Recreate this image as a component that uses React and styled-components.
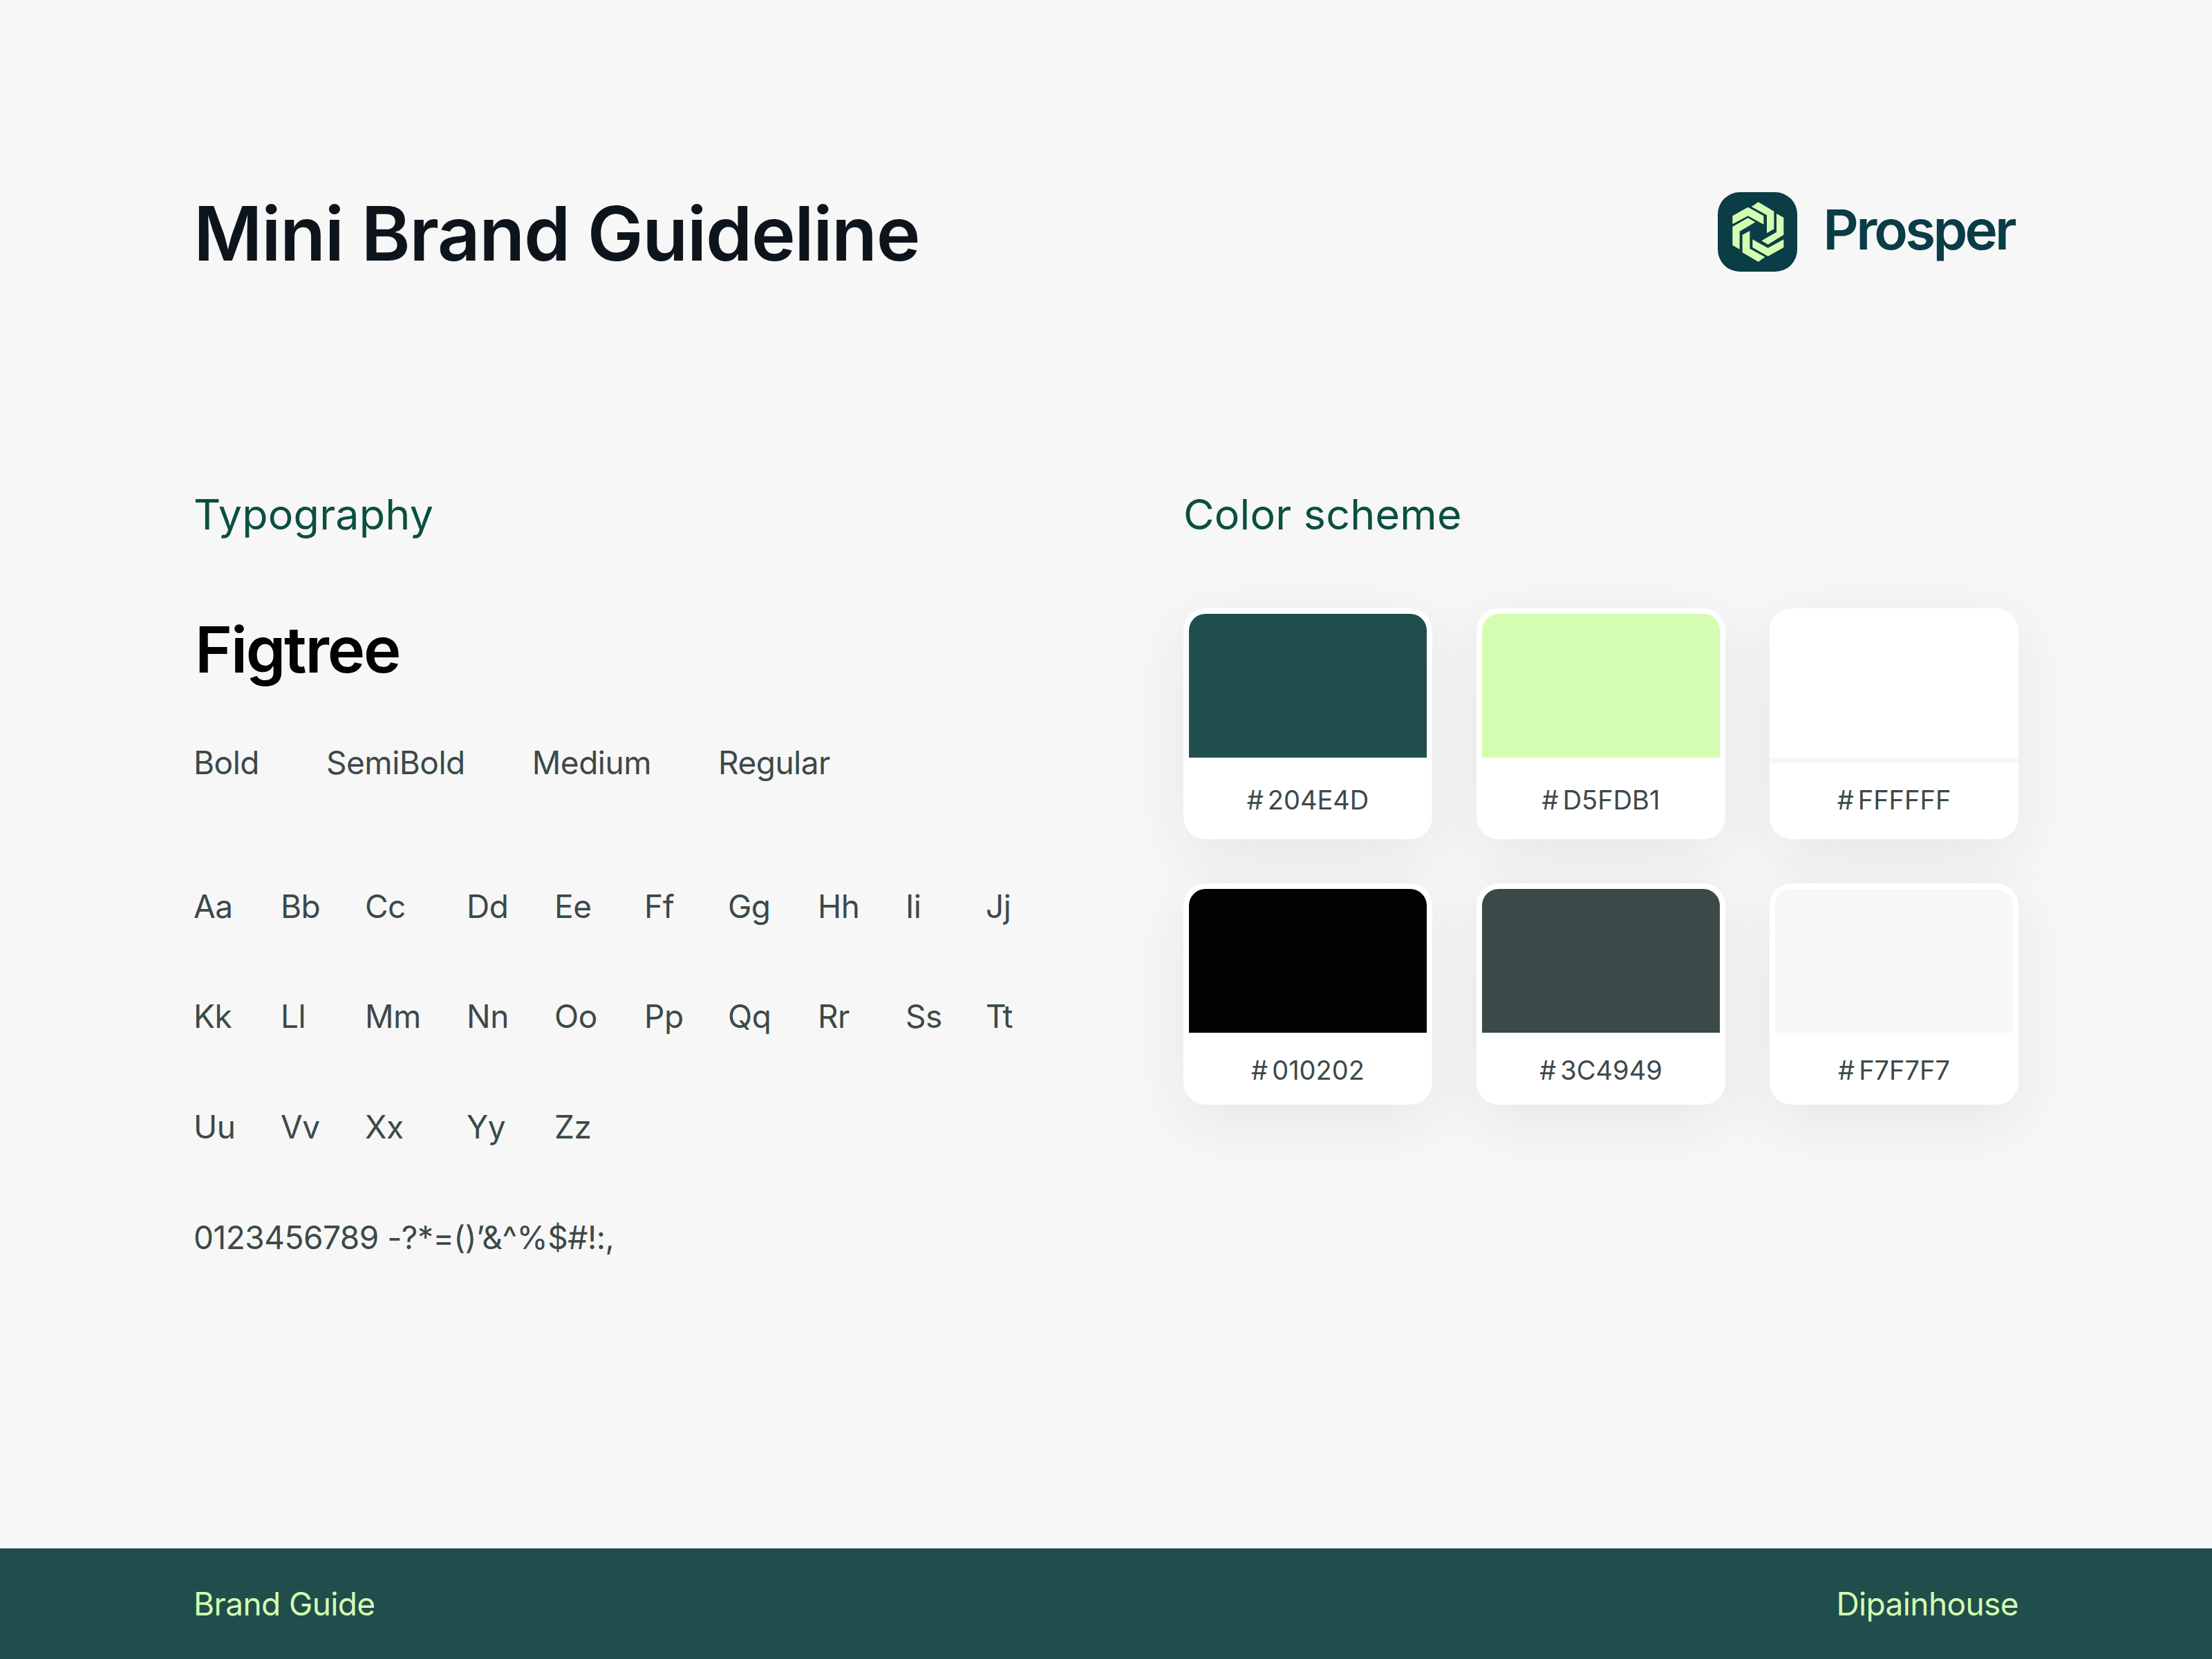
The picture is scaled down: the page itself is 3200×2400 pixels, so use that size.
import React from "react";
import styled, { createGlobalStyle } from "styled-components";

const FONT = `"Inter", "Liberation Sans", sans-serif`;

const GlobalStyle = createGlobalStyle`
  html, body {
    margin: 0;
    padding: 0;
    background: #f7f7f7;
  }
`;

const Page = styled.div`
  width: 3200px;
  height: 2400px;
  display: flex;
  flex-direction: column;
  background: #f7f7f7;
  font-family: ${FONT};
  overflow: hidden;
`;

const Header = styled.header`
  display: flex;
  justify-content: space-between;
  align-items: center;
  height: 115px;
  margin-top: 278px;
  padding: 0 286px 0 280px;
`;

const Title = styled.h1`
  margin: 0;
  padding-top: 3px;
  font-size: 108px;
  font-weight: 600;
  letter-spacing: -1.4px;
  color: #0d141c;
`;

const Brand = styled.div`
  display: flex;
  align-items: center;
  gap: 37px;
`;

const BrandName = styled.span`
  padding-bottom: 8px;
  font-size: 80px;
  font-weight: 600;
  letter-spacing: -3.8px;
  color: #0a3d45;
`;

const Main = styled.main`
  flex: 1;
  display: grid;
  grid-template-columns: 1432px 1208px;
  padding: 311px 280px 0;
`;

const SectionTitle = styled.h2`
  margin: 0;
  font-size: 61px;
  line-height: 80px;
  font-weight: 400;
  letter-spacing: 0.2px;
  color: #0b4f40;
`;

const FontName = styled.div`
  margin: 98px 0 0 2px;
  font-size: 92px;
  line-height: 116px;
  font-weight: 600;
  letter-spacing: -2.2px;
  color: #010202;
`;

const Weights = styled.div`
  display: flex;
  gap: 97px;
  margin-top: 75px;
  font-size: 46px;
  line-height: 60px;
  letter-spacing: -0.5px;
  color: #3c4949;
`;

const Glyphs = styled.div`
  display: grid;
  grid-template-columns: 126px 122px 147px 127px 130px 121px 130px 127px 116px auto;
  grid-auto-rows: 159.5px;
  align-items: center;
  margin-top: 98px;
  font-size: 46px;
  letter-spacing: -0.5px;
  color: #3c4949;
`;

const Digits = styled.div`
  font-size: 46px;
  line-height: 60px;
  letter-spacing: -0.5px;
  margin-top: 50px;
  color: #3c4949;
`;

const Swatches = styled.div`
  display: grid;
  grid-template-columns: repeat(3, 360px);
  grid-template-rows: 334px 320px;
  gap: 64px;
  margin-top: 96px;
`;

const Card = styled.div`
  display: flex;
  flex-direction: column;
  padding: 8px 8px 0;
  background: #fff;
  border-radius: 32px;
  box-shadow: 0 24px 90px rgba(24, 44, 44, 0.08);
`;

const Chip = styled.div`
  position: relative;
  height: 208px;
  flex: none;
  border-radius: 24px 24px 0 0;
  background: ${(props) => props.$color};

  /* the white swatch would vanish into its card, so it gets a rule under it */
  &::after {
    content: "";
    display: ${(props) => (props.$ruled ? "block" : "none")};
    position: absolute;
    left: -8px;
    right: -8px;
    bottom: -8px;
    height: 8px;
    background: #f7f7f7;
  }
`;

const Hex = styled.div`
  flex: 1;
  display: flex;
  align-items: center;
  justify-content: center;
  padding-top: 4px;
  font-size: 38px;
  color: #3c4949;
`;

const Hash = styled.span`
  margin-right: 6px;
`;

const Footer = styled.footer`
  display: flex;
  justify-content: space-between;
  align-items: center;
  height: 160px;
  padding: 0 280px;
  background: #204e4d;
  color: #d5fdb1;
  font-size: 46px;
  letter-spacing: -0.6px;
`;

const colors = ["204E4D", "D5FDB1", "FFFFFF", "010202", "3C4949", "F7F7F7"];

const glyphs = [
  "Aa Bb Cc Dd Ee Ff Gg Hh Ii Jj",
  "Kk Ll Mm Nn Oo Pp Qq Rr Ss Tt",
  "Uu Vv Xx Yy Zz",
];

function Logo() {
  return (
    <svg width="115" height="115" viewBox="137 85 345 345">
      <rect x="137" y="85" width="345" height="345" rx="96" fill="#0a3d45" />
      <g fill="#d5fdb1">
        <polygon points="283,148 313,128 381,168 381,245 350,263 350,185" />
        <polygon points="392,178 423,195 423,270 355,312 327,296 392,258" />
        <polygon points="423,290 423,325 355,363 288,325 288,290 355,327" />
        <polygon points="276,253 276,330 342,366 313,387 244,347 244,270" />
        <polygon points="201,235 268,197 300,215 232,255 232,333 201,315" />
        <polygon points="201,188 268,150 336,188 336,225 268,188 201,224" />
      </g>
    </svg>
  );
}

export default function App() {
  return (
    <Page>
      <GlobalStyle />
      <Header>
        <Title>Mini Brand Guideline</Title>
        <Brand>
          <Logo />
          <BrandName>Prosper</BrandName>
        </Brand>
      </Header>
      <Main>
        <div>
          <SectionTitle>Typography</SectionTitle>
          <FontName>Figtree</FontName>
          <Weights>
            <span>Bold</span>
            <span>SemiBold</span>
            <span>Medium</span>
            <span>Regular</span>
          </Weights>
          <Glyphs>
            {glyphs.flatMap((row) => row.split(" ")).map((pair) => (
              <span key={pair}>{pair}</span>
            ))}
          </Glyphs>
          <Digits>0123456789 -?*=()’&^%$#!:,</Digits>
        </div>
        <div>
          <SectionTitle>Color scheme</SectionTitle>
          <Swatches>
            {colors.map((hex) => (
              <Card key={hex}>
                <Chip $color={`#${hex}`} $ruled={hex === "FFFFFF"} />
                <Hex>
                  <Hash>#</Hash>
                  {hex}
                </Hex>
              </Card>
            ))}
          </Swatches>
        </div>
      </Main>
      <Footer>
        <span>Brand Guide</span>
        <span>Dipainhouse</span>
      </Footer>
    </Page>
  );
}
